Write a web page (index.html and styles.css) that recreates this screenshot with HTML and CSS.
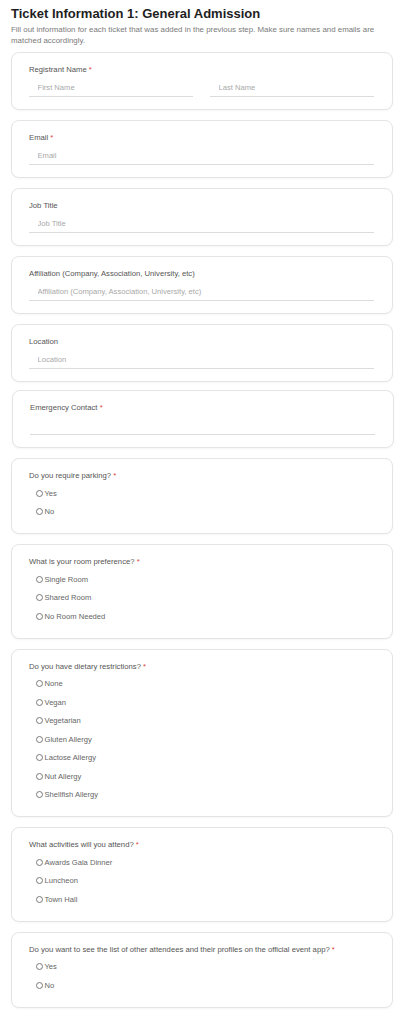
FILE: index.html
```html
<!DOCTYPE html>
<html lang="en">
<head>
<meta charset="utf-8">
<title>Ticket Information</title>
<link rel="stylesheet" href="styles.css">
</head>
<body>
<main class="page">
  <h1 class="title">Ticket Information 1: General Admission</h1>
  <p class="intro">Fill out information for each ticket that was added in the previous step. Make sure names and emails are matched accordingly.</p>

  <section class="card">
    <div class="label">Registrant Name <span class="req">*</span></div>
    <div class="row">
      <input class="field" type="text" placeholder="First Name">
      <input class="field" type="text" placeholder="Last Name">
    </div>
  </section>

  <section class="card">
    <div class="label">Email <span class="req">*</span></div>
    <input class="field" type="text" placeholder="Email">
  </section>

  <section class="card">
    <div class="label">Job Title</div>
    <input class="field" type="text" placeholder="Job Title">
  </section>

  <section class="card">
    <div class="label">Affiliation (Company, Association, University, etc)</div>
    <input class="field" type="text" placeholder="Affiliation (Company, Association, University, etc)">
  </section>

  <section class="card">
    <div class="label">Location</div>
    <input class="field" type="text" placeholder="Location">
  </section>

  <section class="card card-shift">
    <div class="label">Emergency Contact <span class="req">*</span></div>
    <input class="field" type="text">
  </section>

  <section class="card radio-card">
    <div class="label">Do you require parking? <span class="req">*</span></div>
    <ul class="options">
      <li class="opt"><span class="dot"></span>Yes</li>
      <li class="opt"><span class="dot"></span>No</li>
    </ul>
  </section>

  <section class="card radio-card">
    <div class="label">What is your room preference? <span class="req">*</span></div>
    <ul class="options">
      <li class="opt"><span class="dot"></span>Single Room</li>
      <li class="opt"><span class="dot"></span>Shared Room</li>
      <li class="opt"><span class="dot"></span>No Room Needed</li>
    </ul>
  </section>

  <section class="card radio-card">
    <div class="label">Do you have dietary restrictions? <span class="req">*</span></div>
    <ul class="options">
      <li class="opt"><span class="dot"></span>None</li>
      <li class="opt"><span class="dot"></span>Vegan</li>
      <li class="opt"><span class="dot"></span>Vegetarian</li>
      <li class="opt"><span class="dot"></span>Gluten Allergy</li>
      <li class="opt"><span class="dot"></span>Lactose Allergy</li>
      <li class="opt"><span class="dot"></span>Nut Allergy</li>
      <li class="opt"><span class="dot"></span>Shellfish Allergy</li>
    </ul>
  </section>

  <section class="card radio-card">
    <div class="label">What activities will you attend? <span class="req">*</span></div>
    <ul class="options">
      <li class="opt"><span class="dot"></span>Awards Gala Dinner</li>
      <li class="opt"><span class="dot"></span>Luncheon</li>
      <li class="opt"><span class="dot"></span>Town Hall</li>
    </ul>
  </section>

  <section class="card radio-card">
    <div class="label">Do you want to see the list of other attendees and their profiles on the official event app? <span class="req">*</span></div>
    <ul class="options">
      <li class="opt"><span class="dot"></span>Yes</li>
      <li class="opt"><span class="dot"></span>No</li>
    </ul>
  </section>
</main>
</body>
</html>
```

FILE: styles.css
```css
* { box-sizing: border-box; }

html, body {
  margin: 0;
  padding: 0;
  background: #ffffff;
}

body {
  font-family: "Liberation Sans", Arial, Helvetica, sans-serif;
  color: #333;
}

.page {
  display: flex;
  flex-direction: column;
  padding: 6px 8px 0 11px;
}

.title {
  margin: 0;
  font-size: 13px;
  line-height: 16px;
  font-weight: 700;
  color: #1e1e1e;
}

.intro {
  margin: 1.5px 0 6.5px;
  font-size: 7.9px;
  line-height: 11px;
  color: #7a7a7a;
}

.card {
  display: flex;
  flex-direction: column;
  border: 1px solid #e4e4e4;
  border-radius: 8px;
  background: #fff;
  box-shadow: 0 1px 2px rgba(0, 0, 0, 0.04);
  padding: 12px 18px 12px 17px;
  margin-bottom: 10px;
}

.card-shift {
  margin-top: -2px;
  margin-left: 1px;
  margin-right: -1px;
}

.label {
  font-size: 7.7px;
  line-height: 10px;
  color: #555;
  margin-bottom: 5px;
}

.req {
  color: #e0443a;
}

.row {
  display: flex;
  gap: 17px;
}

.row .field {
  flex: 1 1 0;
  min-width: 0;
}

.field {
  display: block;
  width: 100%;
  height: 17px;
  margin: 0;
  padding: 0 0 1px 8.5px;
  border: 0;
  border-bottom: 1px solid #dcdcdc;
  border-radius: 0;
  background: transparent;
  font-family: "Liberation Sans", Arial, Helvetica, sans-serif;
  font-size: 7.6px;
  color: #333;
  outline: none;
}

.field::placeholder {
  color: #a9a9a9;
}

.radio-card .label {
  margin-bottom: 3px;
}

.options {
  list-style: none;
  margin: 0;
  padding: 0 0 0 7px;
  display: flex;
  flex-direction: column;
}

.opt {
  display: flex;
  align-items: center;
  gap: 1.5px;
  height: 18.5px;
  font-size: 7.6px;
  color: #666;
}

.dot {
  width: 7px;
  height: 7px;
  border: 1px solid #7a7a7a;
  border-radius: 50%;
  flex: none;
}
```
